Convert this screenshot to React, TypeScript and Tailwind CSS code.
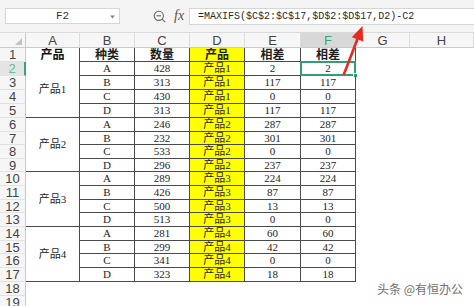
import React from 'react';

const groups = [
  { name: '产品1', items: [['A', 428, 2], ['B', 313, 117], ['C', 430, 0], ['D', 313, 117]] },
  { name: '产品2', items: [['A', 246, 287], ['B', 232, 301], ['C', 533, 0], ['D', 296, 237]] },
  { name: '产品3', items: [['A', 289, 224], ['B', 426, 87], ['C', 500, 13], ['D', 513, 0]] },
  { name: '产品4', items: [['A', 281, 60], ['B', 299, 42], ['C', 341, 0], ['D', 323, 18]] },
];

const cols = ['A', 'B', 'C', 'D', 'E', 'F', 'G', 'H'];

const cell = 'flex items-center justify-center text-[11px] leading-none text-[#1e1e1e] border-r border-b border-[#4a4a4a]';
const rowHead = 'flex items-center justify-center bg-[#f6f6f6] border-r border-b border-[#e2e2e2] border-r-[#c9c9c9] text-[13px] leading-none text-[#444] font-["Liberation_Sans",sans-serif]';

const FormulaBar = () => (
  <div className="flex h-[33px] items-center bg-[#f4f4f4] border-b border-[#dadada] pl-[5px]">
    <div className="relative flex h-[16px] w-[115px] items-center justify-center border border-[#d6d6d6] bg-white">
      <span className="font-['Liberation_Mono',monospace] text-[11px] text-[#333]">F2</span>
      <svg className="absolute right-[4px] top-[6px]" width="5" height="4" viewBox="0 0 5 4">
        <path d="M0 0.5 H5 L2.5 3.5 Z" fill="#888" />
      </svg>
    </div>
    <div className="ml-[33px] flex items-center gap-[8px]">
      <svg width="13" height="13" viewBox="0 0 13 13" fill="none" stroke="#666" strokeWidth="1.1">
        <circle cx="5.8" cy="5.8" r="4.6" />
        <path d="M3.6 5.8 H8" />
        <path d="M9.2 9.2 L12.2 12.2" />
      </svg>
      <span className="font-['Liberation_Serif',serif] text-[14px] italic leading-none text-[#555]">fx</span>
    </div>
    <div className="ml-[5px] flex h-[17px] flex-1 items-center border border-[#d6d6d6] border-r-0 bg-white pl-[8px]">
      <span className="font-['Liberation_Mono',monospace] text-[10px] text-[#2a2a2a]">
        =MAXIFS($C$2:$C$17,$D$2:$D$17,D2)-C2
      </span>
    </div>
  </div>
);

export default function App() {
  let rowNo = 1;

  return (
    <div className="relative h-[306px] w-[474px] overflow-hidden bg-white font-['Liberation_Serif','Noto_Sans_CJK_SC',serif]">
      <FormulaBar />
      <div className="grid grid-cols-[26px_54px_55px_55px_55px_56px_55px_54px_64px] grid-rows-[15px_14px_14px_14px_14px_14px_14px_13px_14px_13px_14px_14px_13px_14px_14px_13px_14px_14px_14px_14px]">
        {/* column headers */}
        <div className="relative bg-[#f6f6f6] border-r border-b border-[#c9c9c9]">
          <svg className="absolute bottom-[2px] right-[3px]" width="7" height="7" viewBox="0 0 7 7">
            <path d="M7 0 V7 H0 Z" fill="#c4c4c4" />
          </svg>
        </div>
        {cols.map((c) => (
          <div
            key={c}
            className={
              c === 'F'
                ? 'flex items-center justify-center bg-[#d8d8d8] border-r border-b border-[#c9c9c9] text-[13px] leading-none text-[#3aa57a] font-["Liberation_Sans",sans-serif]'
                : 'flex items-center justify-center bg-[#f6f6f6] border-r border-b border-[#dcdcdc] border-b-[#c9c9c9] text-[13px] leading-none text-[#444] font-["Liberation_Sans",sans-serif]'
            }
          >
            {c}
          </div>
        ))}

        {/* row 1 */}
        <div className={rowHead}>1</div>
        <div className="flex items-center justify-center border-r border-[#4a4a4a] text-[12px] font-bold leading-none text-[#111]">产品</div>
        <div className={`${cell} text-[12px] font-bold`}>种类</div>
        <div className={`${cell} text-[12px] font-bold`}>数量</div>
        <div className={`${cell} bg-[#ffff00] text-[12px] font-bold`}>产品</div>
        <div className={`${cell} text-[12px] font-bold`}>相差</div>
        <div className={`${cell} text-[12px] font-bold`}>相差</div>
        <div />
        <div />

        {groups.map((g) =>
          g.items.map(([kind, qty, diff], i) => {
            rowNo += 1;
            const isActive = rowNo === 2;
            return (
              <React.Fragment key={`${g.name}-${kind}`}>
                <div
                  className={
                    isActive
                      ? 'flex items-center justify-center bg-[#e4e4e4] border-r-2 border-b border-[#e2e2e2] border-r-[#3aa57a] text-[13px] leading-none text-[#5dbb94] font-["Liberation_Sans",sans-serif]'
                      : rowHead
                  }
                >
                  {rowNo}
                </div>
                {i === 0 && <div className={`${cell} row-span-4`}>{g.name}</div>}
                <div className={cell}>{kind}</div>
                <div className={cell}>{qty}</div>
                <div className={`${cell} bg-[#ffff00]`}>{g.name}</div>
                <div className={cell}>{diff}</div>
                <div className={`${cell} relative`}>
                  {diff}
                  {isActive && (
                    <>
                      <div className="absolute -left-px -top-px -right-px -bottom-px border-2 border-[#2f9e70]" />
                      <div className="absolute -bottom-[3px] -right-[3px] h-[5px] w-[5px] border border-white bg-[#2f9e70]" />
                    </>
                  )}
                </div>
                <div />
                <div />
              </React.Fragment>
            );
          })
        )}

        {[18, 19].map((n) => (
          <React.Fragment key={n}>
            <div className={rowHead}>{n}</div>
            <div />
            <div />
            <div />
            <div />
            <div />
            <div />
            <div />
            <div />
          </React.Fragment>
        ))}
      </div>

      {/* red arrow pointing to the formula */}
      <svg className="absolute left-0 top-0" width="474" height="306" viewBox="0 0 474 306">
        <path d="M344 74 L357.3 39.5" stroke="#e52a20" strokeWidth="2.6" strokeLinecap="round" />
        <path d="M362.5 26 L363.2 41.5 L351.8 37.2 Z" fill="#e52a20" />
      </svg>

      {/* watermark */}
      <div className="absolute left-[377px] top-[283px] font-['Noto_Sans_CJK_SC',sans-serif] text-[12px] leading-none text-[#6f6f6f]">
        头条 @有恒办公
      </div>
    </div>
  );
}
